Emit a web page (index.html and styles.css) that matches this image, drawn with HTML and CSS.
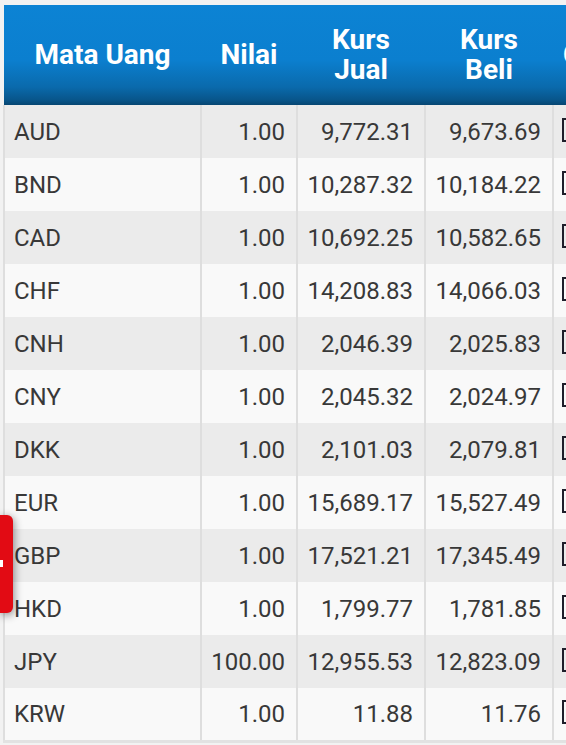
FILE: index.html
```html
<!DOCTYPE html>
<html lang="id">
<head>
<meta charset="utf-8">
<title>Kurs Mata Uang</title>
<link rel="stylesheet" href="styles.css">
</head>
<body>
<div class="viewport">
  <table class="rates">
    <colgroup>
      <col class="c-cur"><col class="c-val"><col class="c-sell"><col class="c-buy"><col class="c-more">
    </colgroup>
    <thead>
      <tr>
        <th>Mata Uang</th>
        <th>Nilai</th>
        <th>Kurs<br>Jual</th>
        <th>Kurs<br>Beli</th>
        <th class="more">Chart</th>
      </tr>
    </thead>
    <tbody>
      <tr><td class="cur">AUD</td><td>1.00</td><td>9,772.31</td><td>9,673.69</td><td class="more"><span class="tofu"></span></td></tr>
      <tr><td class="cur">BND</td><td>1.00</td><td>10,287.32</td><td>10,184.22</td><td class="more"><span class="tofu"></span></td></tr>
      <tr><td class="cur">CAD</td><td>1.00</td><td>10,692.25</td><td>10,582.65</td><td class="more"><span class="tofu"></span></td></tr>
      <tr><td class="cur">CHF</td><td>1.00</td><td>14,208.83</td><td>14,066.03</td><td class="more"><span class="tofu"></span></td></tr>
      <tr><td class="cur">CNH</td><td>1.00</td><td>2,046.39</td><td>2,025.83</td><td class="more"><span class="tofu"></span></td></tr>
      <tr><td class="cur">CNY</td><td>1.00</td><td>2,045.32</td><td>2,024.97</td><td class="more"><span class="tofu"></span></td></tr>
      <tr><td class="cur">DKK</td><td>1.00</td><td>2,101.03</td><td>2,079.81</td><td class="more"><span class="tofu"></span></td></tr>
      <tr><td class="cur">EUR</td><td>1.00</td><td>15,689.17</td><td>15,527.49</td><td class="more"><span class="tofu"></span></td></tr>
      <tr><td class="cur">GBP</td><td>1.00</td><td>17,521.21</td><td>17,345.49</td><td class="more"><span class="tofu"></span></td></tr>
      <tr><td class="cur">HKD</td><td>1.00</td><td>1,799.77</td><td>1,781.85</td><td class="more"><span class="tofu"></span></td></tr>
      <tr><td class="cur">JPY</td><td>100.00</td><td>12,955.53</td><td>12,823.09</td><td class="more"><span class="tofu"></span></td></tr>
      <tr><td class="cur">KRW</td><td>1.00</td><td>11.88</td><td>11.76</td><td class="more"><span class="tofu"></span></td></tr>
    </tbody>
  </table>
</div>
<div class="side-tab"><span class="side-mark"></span></div>
</body>
</html>
```

FILE: styles.css
```css
html, body {
  margin: 0;
  padding: 0;
  background: #f2f2f2;
  font-family: Roboto, "Liberation Sans", Arial, sans-serif;
  overflow: hidden;
}

.viewport {
  width: 566px;
  height: 745px;
  overflow: hidden;
  padding: 5px 0 0 3px;
  box-sizing: border-box;
}

.rates {
  border-collapse: collapse;
  table-layout: fixed;
  width: 649px;
}

.c-cur { width: 197px; }
.c-val { width: 96px; }
.c-sell { width: 128px; }
.c-buy { width: 128px; }
.c-more { width: 100px; }

.rates thead tr {
  height: 100px;
  background: linear-gradient(to bottom, #0c83d4 0%, #0b7fcf 55%, #0a6aac 82%, #08558a 95%, #064672 100%);
}

.rates th {
  color: #ffffff;
  font-weight: 700;
  font-size: 28px;
  line-height: 30px;
  text-align: center;
  padding: 0;
  vertical-align: middle;
}

.rates th.more {
  text-align: left;
  padding-left: 10px;
}

.rates tbody tr {
  height: 53px;
}

.rates tbody tr:nth-child(odd) { background: #ebebeb; }
.rates tbody tr:nth-child(even) { background: #f9f9f9; }

.rates td {
  font-size: 24px;
  font-weight: 400;
  color: #383838;
  text-align: right;
  padding: 0 11px 0 0;
  border-left: 2px solid #dedede;
  border-right: 2px solid #dedede;
  vertical-align: middle;
  white-space: nowrap;
}

.rates tbody tr:last-child td {
  border-bottom: 3px solid #e2e2e2;
}

.rates td.cur {
  text-align: left;
  padding: 0 0 0 9px;
}

.rates td.more {
  text-align: left;
  padding-left: 8px;
}

.tofu {
  display: inline-block;
  width: 12px;
  height: 20px;
  border: 2px solid #1e1e2a;
  vertical-align: middle;
  position: relative;
  top: -3px;
}

.side-tab {
  position: absolute;
  left: 0;
  top: 515px;
  width: 13px;
  height: 98px;
  background: #e20b14;
  border-radius: 0 6px 6px 0;
  box-shadow: 1px 2px 8px rgba(0, 0, 0, 0.45);
}

.side-mark {
  position: absolute;
  left: 0;
  top: 45px;
  width: 3px;
  height: 7px;
  background: #ffffff;
}
```
